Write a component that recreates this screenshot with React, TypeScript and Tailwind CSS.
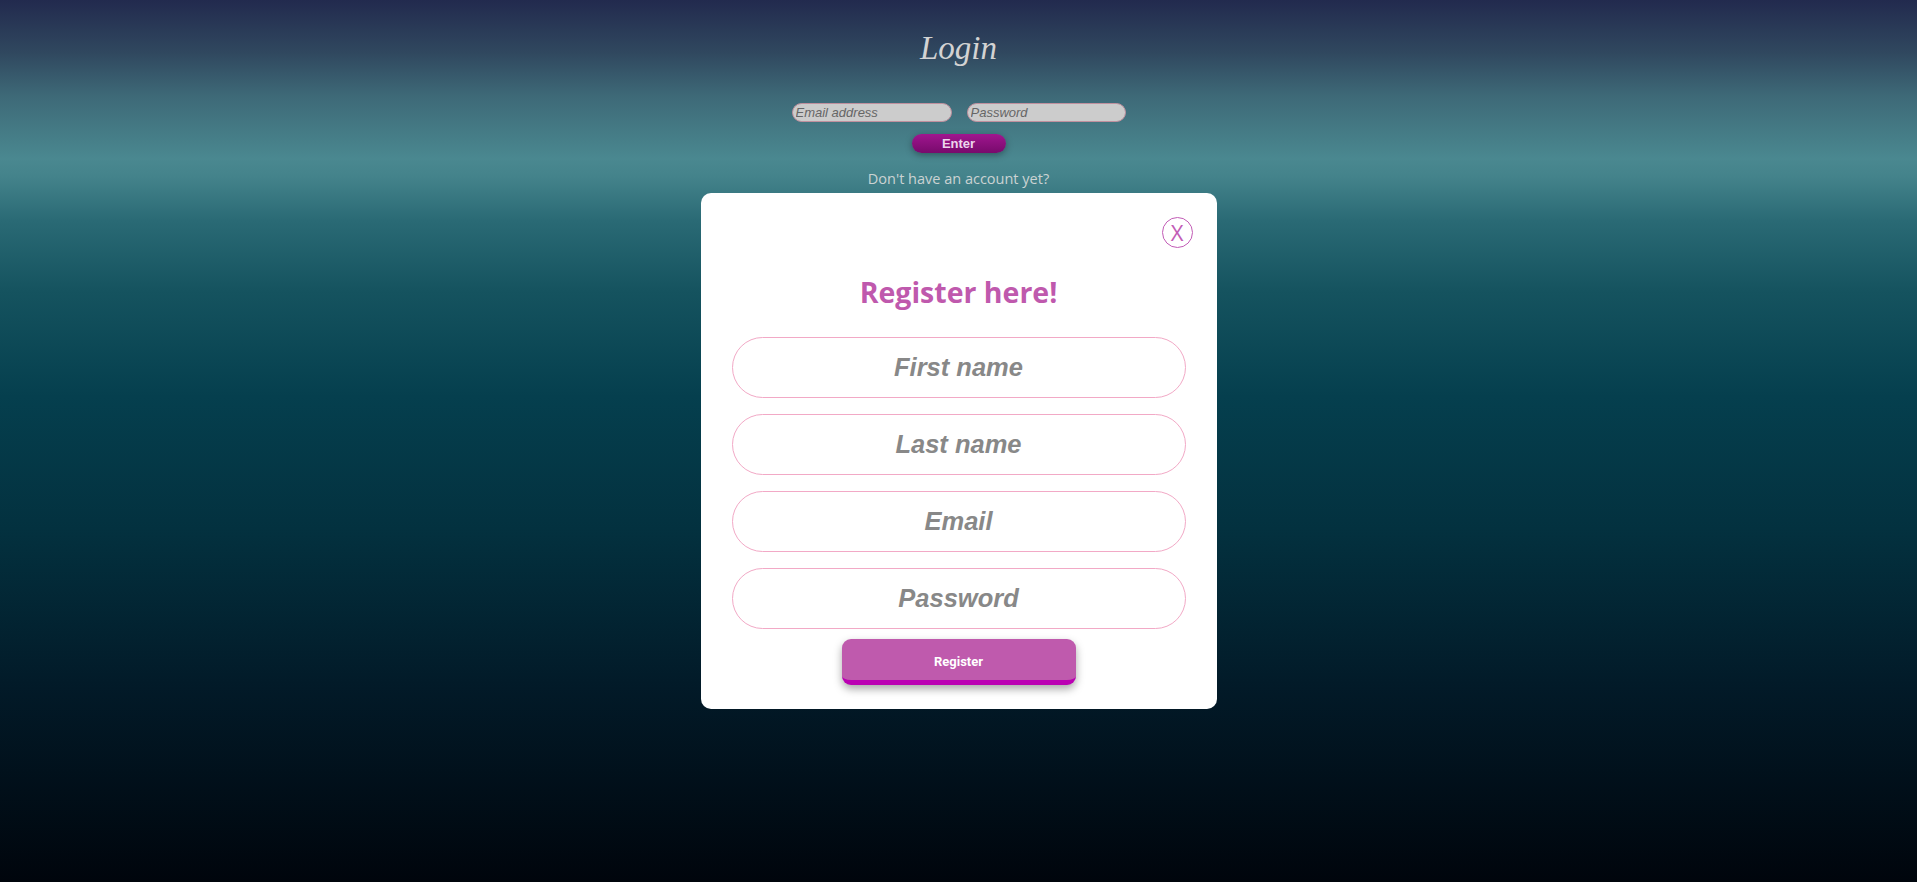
import React from "react";

export default function App() {
  return (
    <div
      className="min-h-screen w-full flex flex-col items-center"
      style={{
        background:
          "linear-gradient(to bottom, #222a4e 0%, #30485f 6%, #3e6a78 11%, #4a8890 18%, #44838b 20%, #2a6a75 25%, #15535f 33%, #053f4e 45%, #03313f 60%, #021a28 78%, #00050c 100%)",
      }}
    >
      <h1 className="pt-[28px] text-[33px] leading-[40px] italic text-[#d3d3d3] font-['Liberation_Serif',serif]">
        Login
      </h1>

      <div className="mt-[35px] flex gap-[15px]">
        <input
          className="w-[160px] h-[19px] rounded-full bg-[#cccccc] border border-[#c0909e] px-[3px] text-[13px] italic font-['Liberation_Sans',Arial,sans-serif] text-[#555] placeholder:text-[#666] outline-none"
          placeholder="Email address"
        />
        <input
          className="w-[159px] h-[19px] rounded-full bg-[#cccccc] border border-[#c0909e] px-[3px] text-[13px] italic font-['Liberation_Sans',Arial,sans-serif] text-[#555] placeholder:text-[#666] outline-none"
          placeholder="Password"
        />
      </div>

      <button className="mt-[12px] w-[94px] h-[19px] rounded-full bg-gradient-to-b from-[#a0168f] to-[#780a6c] text-[#ecd6ec] text-[13px] font-bold leading-[19px] font-['Liberation_Sans',Arial,sans-serif] shadow-[0_2px_7px_rgba(0,0,0,0.35)]">
        Enter
      </button>

      <p className="mt-[16px] text-[14.5px] leading-[20px] text-[#cbd3d3] font-['Open_Sans','Noto_Sans',sans-serif]">
        Don't have an account yet?
      </p>

      <div className="mt-[4px] w-[516px] h-[516px] bg-white rounded-[10px] px-[31px] pt-[24px] flex flex-col items-center">
        <div className="w-full flex justify-end">
          <button className="mr-[-7px] w-[31px] h-[31px] rounded-full border border-[#c25cb6] text-[#c25cb6] text-[22px] leading-[29px] font-['Open_Sans','Noto_Sans',sans-serif] font-normal flex items-center justify-center">
            X
          </button>
        </div>
        <h2 className="mt-[24px] text-[28.5px] leading-[40px] font-bold text-[#bf59ad] font-['Open_Sans','Noto_Sans',sans-serif]">
          Register here!
        </h2>
        <div className="mt-[25px] w-full flex flex-col gap-[16px]">
          {["First name", "Last name", "Email", "Password"].map((p) => (
            <input
              key={p}
              className="w-full h-[61px] rounded-full border border-[#f2a9c6] bg-white text-center text-[25.5px] font-bold italic font-['Liberation_Sans',Arial,sans-serif] text-[#888] placeholder:text-[#888] outline-none"
              placeholder={p}
            />
          ))}
        </div>
        <button className="mt-[10px] w-[234px] h-[46px] rounded-[9px] bg-[#bf5aad] border-b-[5px] border-[#bb00b3] text-white text-[13px] font-bold font-['Roboto',sans-serif] shadow-[0_4px_8px_rgba(0,0,0,0.35)] pt-[4px]">
          Register
        </button>
      </div>
    </div>
  );
}
